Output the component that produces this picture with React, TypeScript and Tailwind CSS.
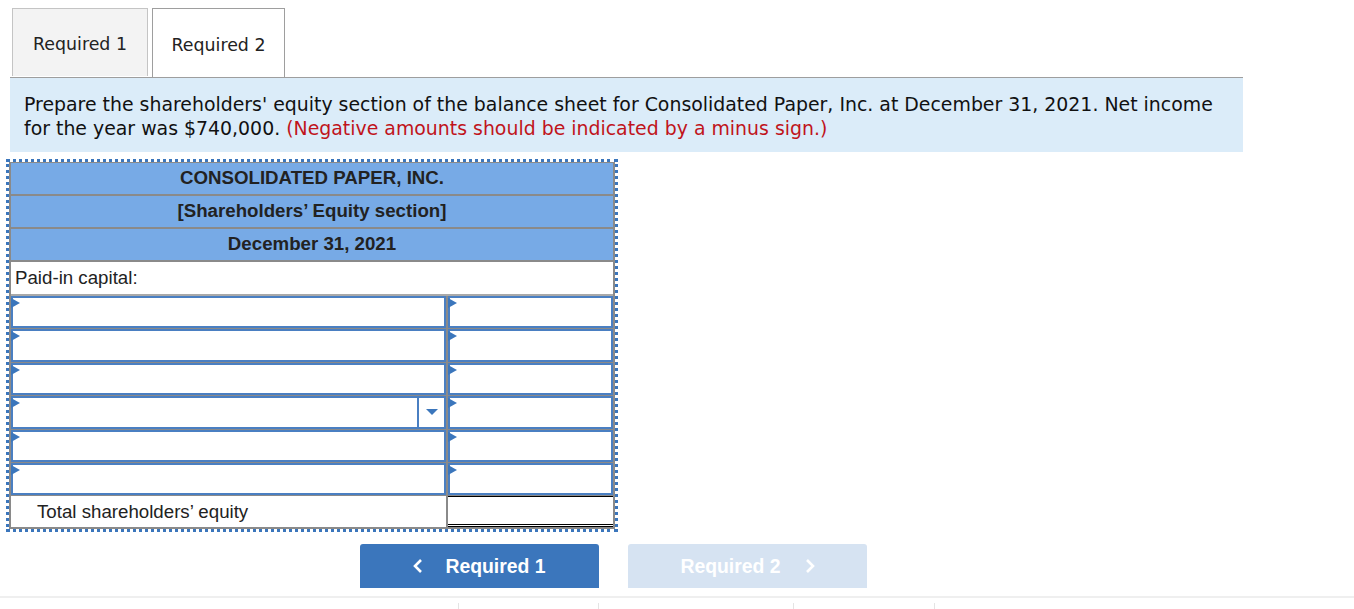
import React from "react";

const Flag = () => (
  <svg className="absolute left-0 top-[2px]" width="9" height="10" viewBox="0 0 9 10">
    <polygon points="0,0 9,5 0,10" fill="#3b76bc" />
  </svg>
);

function InputRow({ dropdown = false }: { dropdown?: boolean }) {
  return (
    <div className="grid grid-cols-[437px_1fr] h-[33.4px] border-b border-[#8a8a8a]">
      <div className="relative border-r-2 border-[#8a8a8a] p-0">
        <div className="h-full border-2 border-[#4a7fc2] bg-white flex justify-end">
          {dropdown && (
            <div className="w-[27px] h-full border-l-2 border-[#4a7fc2] flex items-center justify-center">
              <svg width="12" height="6" viewBox="0 0 12 6">
                <polygon points="0,0 12,0 6,6" fill="#3b76bc" />
              </svg>
            </div>
          )}
        </div>
        <Flag />
      </div>
      <div className="relative">
        <div className="h-full border-2 border-[#4a7fc2] bg-white" />
        <Flag />
      </div>
    </div>
  );
}

export default function App() {
  return (
    <div className="w-[1354px] h-[609px] bg-white relative overflow-hidden" style={{ fontFamily: '"Liberation Sans", Arial, sans-serif' }}>
      {/* Tabs */}
      <div className="pt-[8px] pl-[12px] flex gap-[4px] h-[77px]" style={{ fontFamily: '"DejaVu Sans", Verdana, sans-serif' }}>
        <div className="w-[136px] h-[68px] pt-[4px] bg-[#f3f3f3] border border-[#c4c4c4] border-b-0 flex items-center justify-center text-[17.4px] text-[#222]">
          Required 1
        </div>
        <div className="w-[133px] h-[69px] pt-[4px] bg-white border border-[#9e9e9e] border-b-0 flex items-center justify-center text-[17.4px] text-[#222] relative z-10">
          Required 2
        </div>
      </div>
      {/* Instruction box */}
      <div className="ml-[10px] w-[1233px] border-t border-[#9e9e9e] bg-[#dbecf9] pl-[14px] pr-[10px] pt-[14px] pb-[12px] text-[18.9px] leading-[24px] text-[#111]" style={{ fontFamily: '"DejaVu Sans", Verdana, sans-serif' }}>
        Prepare the shareholders' equity section of the balance sheet for Consolidated Paper, Inc. at December 31, 2021. Net income for the year was $740,000.{" "}
        <span className="text-[#c0141b]">(Negative amounts should be indicated by a minus sign.)</span>
      </div>
      {/* Table */}
      <div className="ml-[6px] mt-[7px] w-[612px] border-[3px] border-dotted border-[#3b76bc]">
        <div className="border-l-2 border-r-2 border-t border-[#8a8a8a] text-[#222] text-[18.7px]">
          <div className="h-[33px] bg-[#77aae6] border-b-2 border-[#8a8a8a] flex items-center justify-center font-bold">CONSOLIDATED PAPER, INC.</div>
          <div className="h-[33px] bg-[#77aae6] border-b-2 border-[#8a8a8a] flex items-center justify-center font-bold">[Shareholders’ Equity section]</div>
          <div className="h-[33px] bg-[#77aae6] border-b-2 border-[#8a8a8a] flex items-center justify-center font-bold">December 31, 2021</div>
          <div className="h-[34px] bg-white border-b-2 border-[#a9a9a9] flex items-center pl-[4px]">Paid-in capital:</div>
          <InputRow />
          <InputRow />
          <InputRow />
          <InputRow dropdown />
          <InputRow />
          <InputRow />
          <div className="grid grid-cols-[437px_1fr] h-[33px] border-b-2 border-[#8a8a8a]">
            <div className="border-r-2 border-[#8a8a8a] flex items-center pl-[26px]">Total shareholders’ equity</div>
            <div className="border-t border-black border-b-[3px] border-double" style={{ borderBottomColor: "#000" }} />
          </div>
        </div>
      </div>
      {/* Buttons */}
      <div className="mt-[12px] flex gap-[29px] pl-[360px]">
        <div className="w-[239px] h-[44px] bg-[#3b76bc] rounded-t-[3px] flex items-center justify-center text-white font-bold text-[19.4px]">
          <svg width="10" height="16" viewBox="0 0 10 16" className="mr-[22px]">
            <polyline points="8,2 2,8 8,14" fill="none" stroke="white" strokeWidth="2.6" />
          </svg>
          Required 1
        </div>
        <div className="w-[239px] h-[44px] bg-[#d6e3f2] rounded-t-[3px] flex items-center justify-center text-white font-bold text-[19.4px]">
          Required 2
          <svg width="10" height="16" viewBox="0 0 10 16" className="ml-[24px]">
            <polyline points="2,2 8,8 2,14" fill="none" stroke="white" strokeWidth="2.6" />
          </svg>
        </div>
      </div>
      <div className="absolute left-0 right-0 top-[596px] h-[2px] bg-[#efefef]" />
      <div className="absolute top-[603px] left-[458px] w-px h-[6px] bg-[#e4e4e4]" />
      <div className="absolute top-[603px] left-[598px] w-px h-[6px] bg-[#e4e4e4]" />
      <div className="absolute top-[603px] left-[793px] w-px h-[6px] bg-[#e4e4e4]" />
      <div className="absolute top-[603px] left-[934px] w-px h-[6px] bg-[#e4e4e4]" />
    </div>
  );
}
